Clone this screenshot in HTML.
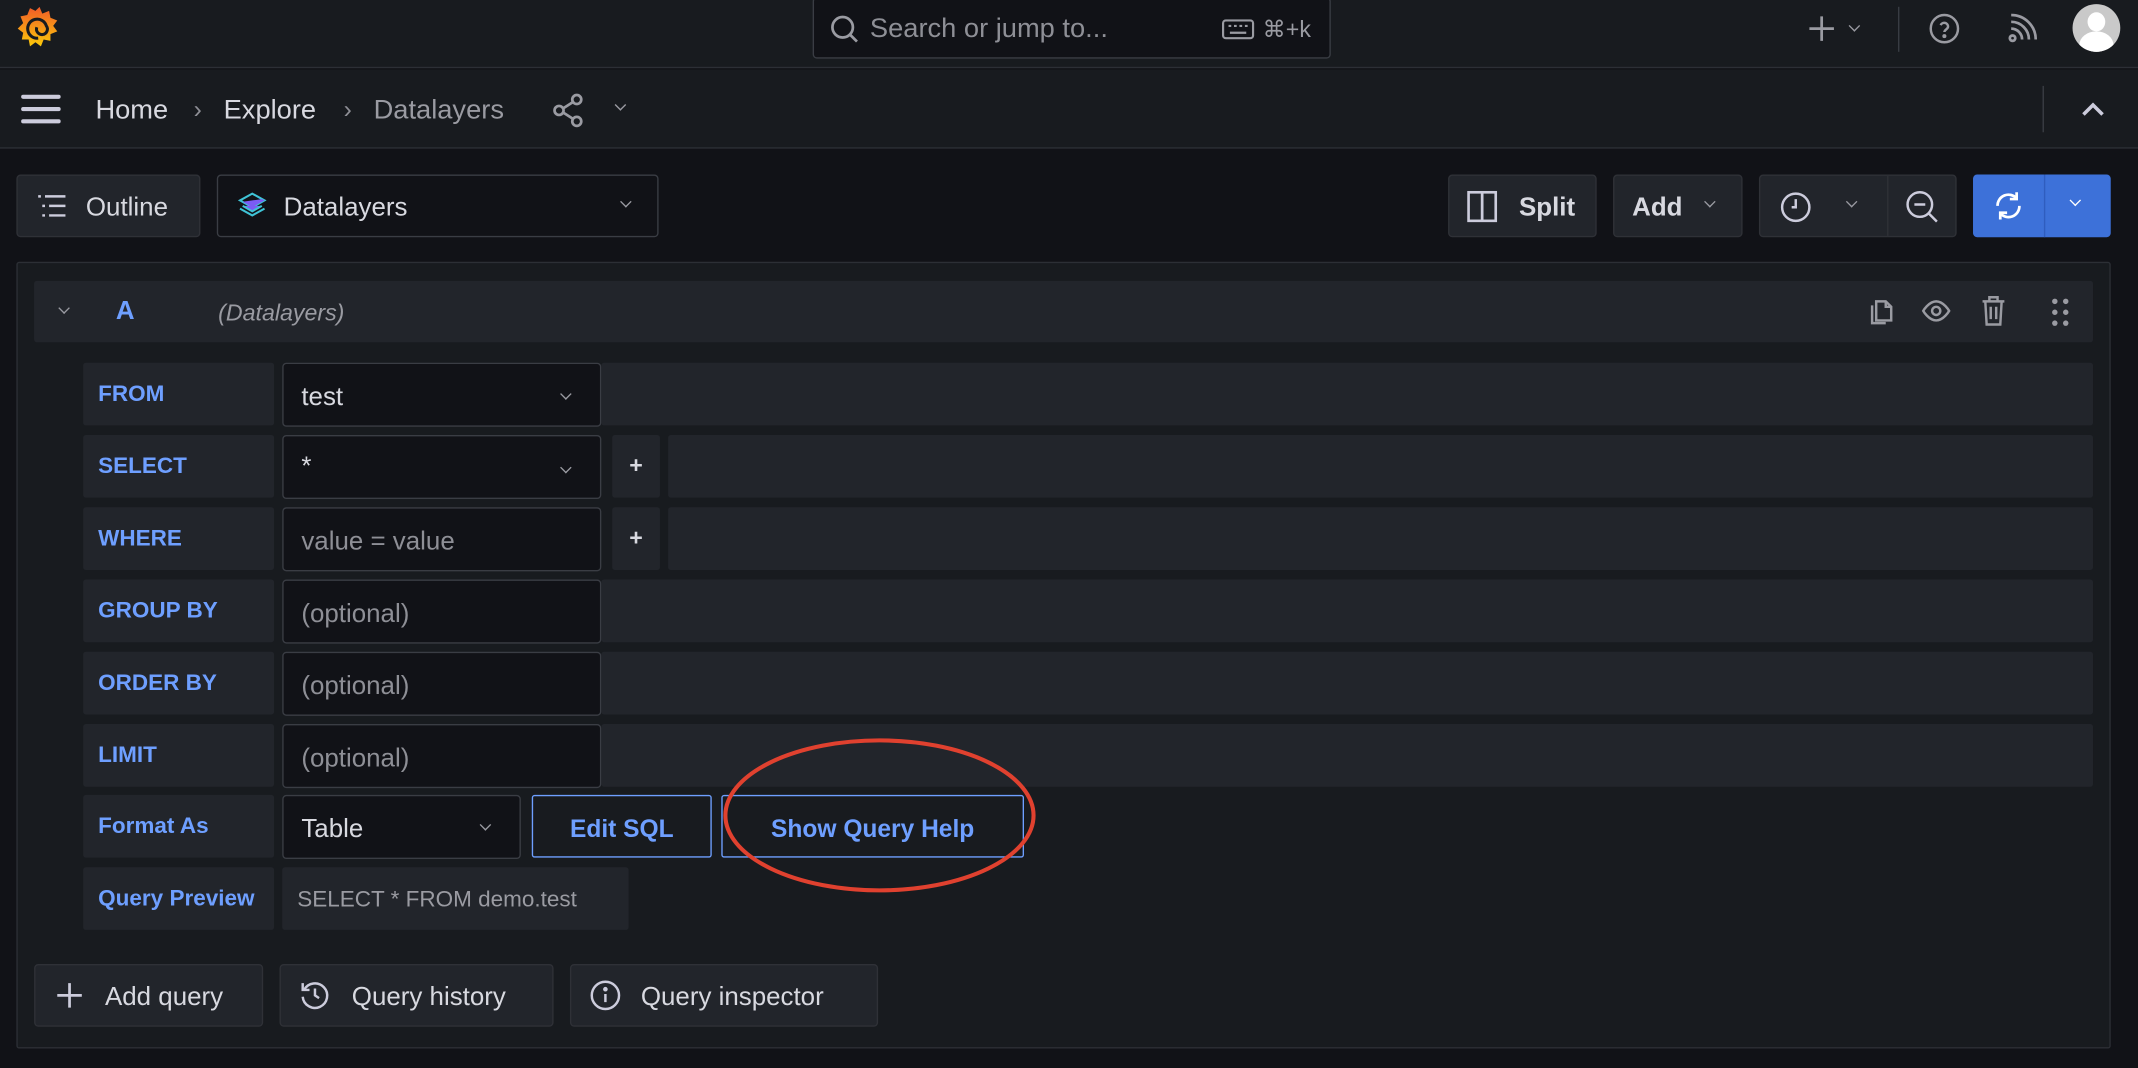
<!DOCTYPE html>
<html><head><meta charset="utf-8"><style>
*{box-sizing:border-box;margin:0;padding:0}
html,body{width:2138px;height:1068px;overflow:hidden;background:#111217}
#w{position:absolute;left:0;top:0;width:1568px;height:783px;transform:scale(1.36352);transform-origin:0 0;font-family:"Liberation Sans",sans-serif;color:#ccccdc;background:#111217}
.a{position:absolute}
.btn{position:absolute;background:#22252b;border:1px solid #2f3137;border-radius:3px;color:#d8d9e0;font-size:19px;display:flex;align-items:center;padding-top:3px}
.lbl{position:absolute;left:61px;width:140px;height:46px;background:#22252b;border-radius:2px;color:#6e9fff;font-size:16.5px;font-weight:bold;display:flex;align-items:center;padding-left:11px}
.inp{position:absolute;left:207px;width:234px;height:47px;background:#111217;border:1px solid #3a3d44;border-radius:3px;font-size:19px;display:flex;align-items:center;padding-left:13px;padding-top:5px;color:#d8d9e0}
.ph{color:#8e8f96}
.fill{position:absolute;background:#22252b;border-radius:2px;height:46px}
.chev{position:absolute;width:8px;height:8px;border-right:1.6px solid #9a9ba2;border-bottom:1.6px solid #9a9ba2;transform:rotate(45deg)}
svg{position:absolute}
</style></head><body><div id="w">
<div class="a" style="left:0;top:0;width:1568px;height:50px;background:#181b1f;border-bottom:1px solid #2c2f35"></div>
<svg style="left:12px;top:3px" width="32" height="36" viewBox="0 0 32 36"><defs><linearGradient id="g" x1="0" y1="0" x2="0" y2="1"><stop offset="0" stop-color="#f05a28"/><stop offset="1" stop-color="#fbca0a"/></linearGradient></defs><path d="M17 2l2 5 5-2 1 5 5 2-3 4 3 4-5 2 0 5-5-1-2 5-4-3-4 3-1-5-5 0 1-5-4-3 4-4-2-5 5-1 2-5 4 2z" fill="url(#g)"/><path d="M16 25a7 7 0 1 1 6-9a4 4 0 1 1-7 1" fill="none" stroke="#181b1f" stroke-width="2.2"/></svg>
<div class="a" style="left:596px;top:-2px;width:380px;height:45px;background:#111217;border:1px solid #3a3d44;border-radius:3px"></div>
<svg style="left:608px;top:10px" width="24" height="24" viewBox="0 0 24 24" fill="none" stroke="#9a9ba2" stroke-width="2"><circle cx="10" cy="10" r="7.5"/><path d="M15.5 15.5l5 5"/></svg>
<div class="a" style="left:638px;top:10px;font-size:20px;color:#8e8f96">Search or jump to...</div>
<svg style="left:896px;top:14px" width="24" height="16" viewBox="0 0 24 16" fill="none" stroke="#9a9ba2" stroke-width="1.6"><rect x="1" y="1" width="22" height="13" rx="2"/><path d="M5 5h2M9 5h2M13 5h2M17 5h2M6 10h12"/></svg>
<div class="a" style="left:926px;top:12px;font-size:17px;color:#9a9ba2">⌘+k</div>
<svg style="left:1326px;top:11px" width="20" height="20" viewBox="0 0 20 20" stroke="#9a9ba2" stroke-width="2"><path d="M10 1v18M1 10h18"/></svg>
<div class="chev" style="left:1357px;top:16px;width:6px;height:6px"></div>
<div class="a" style="left:1392px;top:5px;width:1px;height:33px;background:#3a3d44"></div>
<svg style="left:1414px;top:9px" width="24" height="24" viewBox="0 0 24 24" fill="none" stroke="#9a9ba2" stroke-width="1.8"><circle cx="12" cy="12" r="10"/><path d="M9.3 9.5a2.8 2.8 0 0 1 5.4 1c0 1.8-2.7 2.3-2.7 4"/><circle cx="12" cy="17.5" r=".6" fill="#9a9ba2"/></svg>
<svg style="left:1472px;top:10px" width="22" height="22" viewBox="0 0 22 22" fill="none" stroke="#9a9ba2" stroke-width="2"><circle cx="4" cy="18" r="2"/><path d="M3 11a8 8 0 0 1 8 8M3 6a13 13 0 0 1 13 13M3 1a18 18 0 0 1 18 18"/></svg>
<div class="a" style="left:1520px;top:3px;width:35px;height:35px;border-radius:50%;background:#c9c9c9;overflow:hidden"><div class="a" style="left:11px;top:6px;width:13px;height:14px;border-radius:50%;background:#fff"></div><div class="a" style="left:5px;top:20px;width:25px;height:20px;border-radius:50% 50% 0 0;background:#fff"></div></div>
<div class="a" style="left:0;top:51px;width:1568px;height:58px;background:#181b1f;border-bottom:1px solid #2c2f35"></div>
<svg style="left:15px;top:69px" width="30" height="22" viewBox="0 0 30 22" stroke="#ccccdc" stroke-width="3" stroke-linecap="round"><path d="M2 2h26M2 11h26M2 20h26"/></svg>
<div class="a" style="left:70px;top:70px;font-size:20px;color:#d8d9e0">Home</div>
<div class="a" style="left:142px;top:70px;font-size:18px;color:#8e8f96">›</div>
<div class="a" style="left:164px;top:70px;font-size:20px;color:#d8d9e0">Explore</div>
<div class="a" style="left:252px;top:70px;font-size:18px;color:#8e8f96">›</div>
<div class="a" style="left:274px;top:70px;font-size:20px;color:#9a9ba2">Datalayers</div>
<svg style="left:404px;top:68px" width="26" height="26" viewBox="0 0 26 26" fill="none" stroke="#9a9ba2" stroke-width="2"><circle cx="19" cy="5" r="3.3"/><circle cx="6" cy="13" r="3.3"/><circle cx="19" cy="21" r="3.3"/><path d="M9 11.5l7-4.5M9 14.5l7 4.5"/></svg>
<div class="chev" style="left:452px;top:74px;width:6px;height:6px"></div>
<div class="a" style="left:1498px;top:63px;width:1px;height:34px;background:#3a3d44"></div>
<svg style="left:1526px;top:74px" width="18" height="12" viewBox="0 0 18 12" fill="none" stroke="#ccccdc" stroke-width="2.6"><path d="M2 10l7-7 7 7"/></svg>
<div class="btn" style="left:12px;top:128px;width:135px;height:46px;padding-left:50px">Outline</div>
<svg style="left:27px;top:142px" width="22" height="18" viewBox="0 0 22 18" stroke="#ccccdc" stroke-width="1.8"><path d="M1 2h2M6 2h15M4 9h2M9 9h12M4 16h2M9 16h12"/></svg>
<div class="a" style="left:159px;top:128px;width:324px;height:46px;background:#111217;border:1px solid #3a3d44;border-radius:3px;font-size:19px;color:#d8d9e0;padding:13px 0 0 48px">Datalayers</div>
<svg style="left:173px;top:139px" width="24" height="24" viewBox="0 0 24 24" fill="none"><path d="M12 3l9 5-9 5-9-5z" stroke="#3fc3d6" stroke-width="1.5"/><path d="M5 12l7 4 7-4" stroke="#3fc3d6" stroke-width="1.5" fill="#7b5cf5"/><path d="M3 14l9 5 9-5" stroke="#3fc3d6" stroke-width="1.5"/><path d="M5 9l7 4 9-5-2-1z" fill="#7b5cf5"/></svg>
<div class="chev" style="left:456px;top:145px;width:6px;height:6px"></div>
<div class="btn" style="left:1062px;top:128px;width:109px;height:46px;padding-left:51px;font-weight:bold">Split</div>
<svg style="left:1076px;top:140px" width="22" height="23" viewBox="0 0 22 23" fill="none" stroke="#ccccdc" stroke-width="2"><rect x="1" y="1" width="20" height="21"/><path d="M11 1v21"/></svg>
<div class="btn" style="left:1183px;top:128px;width:95px;height:46px;padding-left:13px;font-weight:bold">Add</div>
<div class="chev" style="left:1251px;top:145px;width:6px;height:6px"></div>
<div class="btn" style="left:1290px;top:128px;width:145px;height:46px"></div>
<div class="a" style="left:1384px;top:129px;width:1px;height:44px;background:#2f3137"></div>
<svg style="left:1305px;top:140px" width="24" height="24" viewBox="0 0 24 24" fill="none" stroke="#ccccdc" stroke-width="1.8"><circle cx="12" cy="12" r="10"/><path d="M12 6v6h-3"/></svg>
<div class="chev" style="left:1355px;top:145px;width:6px;height:6px"></div>
<svg style="left:1397px;top:139px" width="26" height="26" viewBox="0 0 26 26" fill="none" stroke="#ccccdc" stroke-width="1.8"><circle cx="11" cy="11" r="9"/><path d="M7 11h8M17.5 17.5l6 6"/></svg>
<div class="a" style="left:1447px;top:128px;width:101px;height:46px;background:#3d71d9;border-radius:3px"></div>
<div class="a" style="left:1499px;top:128px;width:1px;height:46px;background:#2f5dbf"></div>
<svg style="left:1460px;top:138px" width="26" height="26" viewBox="0 0 26 26" fill="none" stroke="#fff" stroke-width="2"><path d="M5 13a8 8 0 0 1 14-5.5M21 13a8 8 0 0 1-14 5.5"/><path d="M19 3v5h-5M7 23v-5h5"/></svg>
<div class="chev" style="left:1519px;top:144px;width:6px;height:6px;border-color:#fff"></div>
<div class="a" style="left:12px;top:192px;width:1536px;height:577px;background:#181b1f;border:1px solid #2c2f35;border-radius:2px"></div>
<div class="a" style="left:25px;top:206px;width:1510px;height:45px;background:#22252b;border-radius:2px"></div>
<div class="chev" style="left:44px;top:223px;width:6px;height:6px"></div>
<div class="a" style="left:85px;top:218px;font-size:19px;font-weight:bold;color:#6e9fff">A</div>
<div class="a" style="left:160px;top:220px;font-size:17px;font-style:italic;color:#9a9ba2">(Datalayers)</div>
<svg style="left:1369px;top:216px" width="22" height="24" viewBox="0 0 22 24" fill="none" stroke="#9a9ba2" stroke-width="1.8"><path d="M7 5h7l4 4v10H7z"/><path d="M4 8v13h10"/><path d="M14 5v4h4"/></svg>
<svg style="left:1409px;top:217px" width="22" height="22" viewBox="0 0 22 22" fill="none" stroke="#9a9ba2" stroke-width="1.8"><path d="M1.5 11s4-7 9.5-7 9.5 7 9.5 7-4 7-9.5 7-9.5-7-9.5-7z"/><circle cx="11" cy="11" r="3"/></svg>
<svg style="left:1452px;top:216px" width="20" height="24" viewBox="0 0 20 24" fill="none" stroke="#9a9ba2" stroke-width="1.8"><path d="M2 5h16M7 5V2h6v3M4 5l1 17h10l1-17M8 9v9M12 9v9"/></svg>
<svg style="left:1503px;top:218px" width="16" height="22" viewBox="0 0 16 22" fill="#9a9ba2"><circle cx="4" cy="3" r="2"/><circle cx="12" cy="3" r="2"/><circle cx="4" cy="11" r="2"/><circle cx="12" cy="11" r="2"/><circle cx="4" cy="19" r="2"/><circle cx="12" cy="19" r="2"/></svg>
<div class="lbl" style="top:266px">FROM</div>
<div class="inp" style="top:266px">test</div><div class="chev" style="left:412px;top:286px;width:6px;height:6px"></div>
<div class="fill" style="left:441px;top:266px;width:1094px"></div>
<div class="lbl" style="top:319px">SELECT</div>
<div class="inp" style="top:319px;align-items:flex-start;padding-top:12px">*</div><div class="chev" style="left:412px;top:340px;width:6px;height:6px"></div>
<div class="fill" style="left:449px;top:319px;width:35px;color:#d8d9e0;font-weight:bold;font-size:17px;text-align:center;line-height:46px">+</div>
<div class="fill" style="left:490px;top:319px;width:1045px"></div>
<div class="lbl" style="top:372px">WHERE</div>
<div class="inp ph" style="top:372px">value = value</div>
<div class="fill" style="left:449px;top:372px;width:35px;color:#d8d9e0;font-weight:bold;font-size:17px;text-align:center;line-height:46px">+</div>
<div class="fill" style="left:490px;top:372px;width:1045px"></div>
<div class="lbl" style="top:425px">GROUP BY</div>
<div class="inp ph" style="top:425px">(optional)</div>
<div class="fill" style="left:441px;top:425px;width:1094px"></div>
<div class="lbl" style="top:478px">ORDER BY</div>
<div class="inp ph" style="top:478px">(optional)</div>
<div class="fill" style="left:441px;top:478px;width:1094px"></div>
<div class="lbl" style="top:531px">LIMIT</div>
<div class="inp ph" style="top:531px">(optional)</div>
<div class="fill" style="left:441px;top:531px;width:1094px"></div>
<div class="lbl" style="top:583px">Format As</div>
<div class="inp" style="top:583px;width:175px">Table</div><div class="chev" style="left:353px;top:602px;width:6px;height:6px"></div>
<div class="a" style="left:390px;top:583px;width:132px;height:46px;border:1px solid #6e9fff;border-radius:2px;background:#181b1f;color:#6e9fff;font-size:18px;font-weight:bold;text-align:center;line-height:48px">Edit SQL</div>
<div class="a" style="left:529px;top:583px;width:222px;height:46px;border:1px solid #6e9fff;border-radius:2px;background:#181b1f;color:#6e9fff;font-size:18px;font-weight:bold;text-align:center;line-height:48px">Show Query Help</div>
<div class="lbl" style="top:636px;font-size:16.5px">Query Preview</div>
<div class="fill" style="left:207px;top:636px;width:254px;color:#9a9ba2;font-size:16.5px;line-height:48px;padding-left:11px">SELECT * FROM demo.test</div>
<div class="btn" style="left:25px;top:707px;width:168px;height:46px;padding-left:51px">Add query</div>
<svg style="left:41px;top:720px" width="20" height="20" viewBox="0 0 20 20" stroke="#ccccdc" stroke-width="2"><path d="M10 1v18M1 10h18"/></svg>
<div class="btn" style="left:205px;top:707px;width:201px;height:46px;padding-left:52px">Query history</div>
<svg style="left:219px;top:718px" width="24" height="24" viewBox="0 0 24 24" fill="none" stroke="#ccccdc" stroke-width="1.8"><path d="M4 8a9 9 0 1 1-1 5"/><path d="M3 3v5h5M12 7v5l3 2"/></svg>
<div class="btn" style="left:418px;top:707px;width:226px;height:46px;padding-left:51px">Query inspector</div>
<svg style="left:432px;top:718px" width="24" height="24" viewBox="0 0 24 24" fill="none" stroke="#ccccdc" stroke-width="1.8"><circle cx="12" cy="12" r="10"/><path d="M12 11v6"/><circle cx="12" cy="7.5" r=".8" fill="#ccccdc"/></svg>
<svg style="left:520px;top:538px" width="250" height="122" viewBox="0 0 250 122"><ellipse cx="125" cy="60" rx="113" ry="55" fill="none" stroke="#e0412f" stroke-width="3"/></svg>
</div></body></html>
